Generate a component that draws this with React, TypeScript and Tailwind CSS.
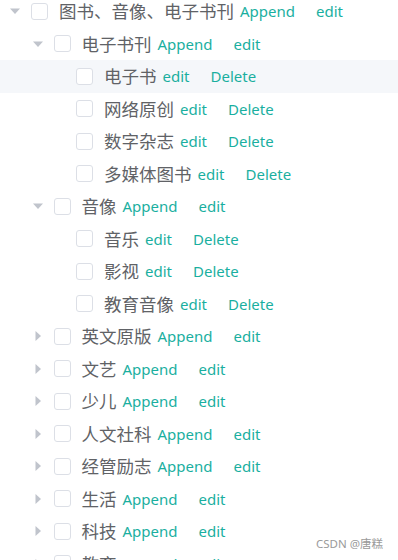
import React from "react";

type Node = {
  label: string;
  level: number;
  caret?: "open" | "closed";
  leaf?: boolean;
  hover?: boolean;
};

const rows: Node[] = [
  { label: "图书、音像、电子书刊", level: 0, caret: "open" },
  { label: "电子书刊", level: 1, caret: "open" },
  { label: "电子书", level: 2, leaf: true, hover: true },
  { label: "网络原创", level: 2, leaf: true },
  { label: "数字杂志", level: 2, leaf: true },
  { label: "多媒体图书", level: 2, leaf: true },
  { label: "音像", level: 1, caret: "open" },
  { label: "音乐", level: 2, leaf: true },
  { label: "影视", level: 2, leaf: true },
  { label: "教育音像", level: 2, leaf: true },
  { label: "英文原版", level: 1, caret: "closed" },
  { label: "文艺", level: 1, caret: "closed" },
  { label: "少儿", level: 1, caret: "closed" },
  { label: "人文社科", level: 1, caret: "closed" },
  { label: "经管励志", level: 1, caret: "closed" },
  { label: "生活", level: 1, caret: "closed" },
  { label: "科技", level: 1, caret: "closed" },
  { label: "教育", level: 1, caret: "closed" },
];

// small filled triangle, like el-icon-caret-right
function Caret({ open }: { open: boolean }) {
  return (
    <svg
      width="10"
      height="10"
      viewBox="0 0 10 10"
      className={open ? "rotate-90" : ""}
    >
      <path d="M2.5 0 L8 5 L2.5 10 Z" fill="#c0c4cc" />
    </svg>
  );
}

function TreeRow({ node }: { node: Node }) {
  const pad = ["pl-0", "pl-[22.5px]", "pl-[45px]"][node.level];
  return (
    <div
      className={`flex h-[32.5px] items-center ${pad} ${node.hover ? "bg-[#f5f7fa]" : ""}`}
    >
      <span className="flex w-[30px] shrink-0 justify-center">
        {node.caret ? <Caret open={node.caret === "open"} /> : null}
      </span>
      <span className="ml-px h-[17px] w-[17px] shrink-0 rounded-[3px] border border-[#dcdfe6] bg-white" />
      <span className="ml-[11px] whitespace-nowrap text-[17.5px] text-[#606266]">
        {node.label}
      </span>
      <span className="ml-[6px] whitespace-nowrap text-[15px] text-[#1aaf9f]">
        {node.leaf ? "edit" : "Append"}
      </span>
      <span className="ml-[21px] whitespace-nowrap text-[15px] text-[#1aaf9f]">
        {node.leaf ? "Delete" : "edit"}
      </span>
    </div>
  );
}

export default function App() {
  return (
    <div
      className="relative h-[560px] w-[398px] overflow-hidden bg-white"
      style={{ fontFamily: '"Noto Sans", "Noto Sans CJK SC", sans-serif' }}
    >
      <div className="-mt-[5px]">
        {rows.map((n, i) => (
          <TreeRow key={i} node={n} />
        ))}
      </div>
      <div className="absolute bottom-[8px] right-[15px] text-[11.5px] text-[#9a9a9a]">
        CSDN @唐糕
      </div>
    </div>
  );
}
